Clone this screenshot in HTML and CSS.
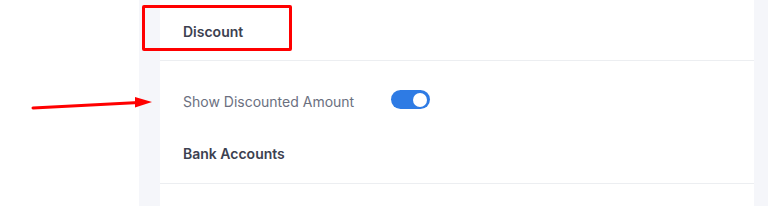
FILE: index.html
```html
<!DOCTYPE html>
<html lang="en">
<head>
    <meta charset="UTF-8">
    <meta name="viewport" content="width=device-width, initial-scale=1.0">
    <title>Discount Settings</title>
    <link rel="stylesheet" href="styles.css">
</head>
<body>
    <div class="layout">
        <div class="outside"></div>
        <div class="gutter"></div>

        <div class="panel">
            <div class="section-head">
                <h4>Discount</h4>
            </div>

            <div class="section-body">
                <div class="setting-row">
                    <span class="setting-label">Show Discounted Amount</span>
                    <span class="toggle on"><span class="knob"></span></span>
                </div>
                <h4 class="sub-title">Bank Accounts</h4>
            </div>
        </div>

        <div class="gutter-right"></div>
    </div>

    <!-- annotation marks -->
    <div class="mark-box"></div>
    <svg class="mark-arrow" width="130" height="20" viewBox="0 0 130 20">
        <line x1="2" y1="16" x2="108" y2="10.5" stroke="#f00" stroke-width="3" stroke-linecap="round"/>
        <polygon points="104,5 121,10 104,15.5" fill="#f00"/>
    </svg>
</body>
</html>
```

FILE: styles.css
```css
body {
    margin: 0;
    font-family: Inter, "Open Sans", Arial, sans-serif;
    background: #fff;
    height: 206px;
    overflow: hidden;
    position: relative;
}

.layout {
    display: flex;
    height: 206px;
}

.outside {
    width: 139px;
    background: #fff;
}

.gutter {
    width: 21px;
    background: #f5f6fa;
}

.panel {
    flex: 1;
    background: #fff;
}

.gutter-right {
    width: 14px;
    background: #f5f6fa;
}

.section-head {
    height: 61px;
    box-sizing: border-box;
    padding: 22px 0 0 23px;
    border-bottom: 1px solid #eceef1;
}

h4 {
    margin: 0;
    font-size: 14px;
    line-height: 20px;
    font-weight: 600;
    color: #3c4150;
}

.section-body {
    padding: 29px 0 19px 23px;
    border-bottom: 1px solid #eceef1;
}

.setting-row {
    display: flex;
    align-items: center;
    height: 19px;
}

.setting-label {
    font-size: 14px;
    color: #6b7080;
    width: 208px;
    padding-top: 3px;
}

.toggle {
    width: 39px;
    height: 19px;
    border-radius: 10px;
    background: #ccd1d9;
    display: flex;
    align-items: center;
    box-sizing: border-box;
    padding: 0 3px;
}

.toggle.on {
    background: #2e7be4;
    justify-content: flex-end;
}

.knob {
    width: 14px;
    height: 14px;
    border-radius: 50%;
    background: #fff;
}

.sub-title {
    margin-top: 35px;
}

.mark-box {
    position: absolute;
    left: 142px;
    top: 5px;
    width: 150px;
    height: 46px;
    box-sizing: border-box;
    border: 3px solid #f00;
    border-radius: 2px;
}

.mark-arrow {
    position: absolute;
    left: 31px;
    top: 92px;
}
```
